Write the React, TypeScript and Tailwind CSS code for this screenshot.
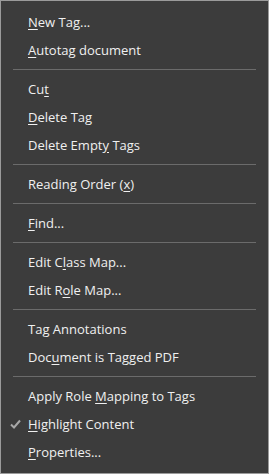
import React from "react";

type Item = { label: string; u: number; checked?: boolean } | "sep";

const items: Item[] = [
  { label: "New Tag...", u: 0 },
  { label: "Autotag document", u: 0 },
  "sep",
  { label: "Cut", u: 2 },
  { label: "Delete Tag", u: 0 },
  { label: "Delete Empty Tags", u: 11 },
  "sep",
  { label: "Reading Order (x)", u: 15 },
  "sep",
  { label: "Find...", u: 0 },
  "sep",
  { label: "Edit Class Map...", u: 6 },
  { label: "Edit Role Map...", u: 6 },
  "sep",
  { label: "Tag Annotations", u: 2 },
  { label: "Document is Tagged PDF", u: 3 },
  "sep",
  { label: "Apply Role Mapping to Tags", u: 11 },
  { label: "Highlight Content", u: 0, checked: true },
  { label: "Properties...", u: 0 },
];

export default function App() {
  return (
    <div
      className="w-[269px] h-[474px] bg-[#3c3c3c] border border-[#9b9b9b] py-[7px] text-[#f0f0f0] text-[13px] flex flex-col"
      style={{ fontFamily: '"Open Sans", "Noto Sans", sans-serif' }}
    >
      {items.map((it, i) =>
        it === "sep" ? (
          <div key={i} className="h-[11px] flex items-center px-[12px]">
            <div className="h-px w-full bg-[#6b6b6b]" />
          </div>
        ) : (
          <div key={i} className="h-[28px] flex items-center relative pl-[27px]">
            {it.checked && (
              <svg
                className="absolute left-[9px] top-[9px]"
                width="11"
                height="10"
                viewBox="0 0 11 10"
              >
                <path d="M1 5.5 L4 8.5 L10 1.5" stroke="#a8a8a8" strokeWidth="2" fill="none" />
              </svg>
            )}
            <span className="whitespace-pre leading-none">
              {it.label.slice(0, it.u)}
              <span className="underline underline-offset-2">{it.label[it.u]}</span>
              {it.label.slice(it.u + 1)}
            </span>
          </div>
        )
      )}
    </div>
  );
}
